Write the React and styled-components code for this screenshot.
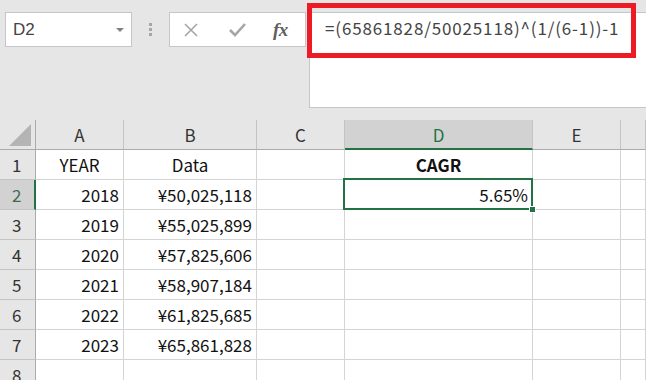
import React from "react";
import styled, { createGlobalStyle, css } from "styled-components";

const Global = createGlobalStyle`
  html, body { margin: 0; padding: 0; background: #e6e6e6; }
  body { width: 646px; height: 380px; overflow: hidden; font-family: "Noto Sans CJK JP", "Noto Sans", sans-serif; }
`;

const GREEN = "#217346";

const Page = styled.div`
  width: 646px;
  height: 380px;
  overflow: hidden;
  background: #e6e6e6;
`;

const TopBar = styled.div`
  display: flex;
  align-items: flex-start;
  height: 120px;
  box-sizing: border-box;
  padding: 12px 0 0 5px;
`;

const NameBox = styled.div`
  width: 127px;
  height: 35px;
  box-sizing: border-box;
  border: 1px solid #c6c6c6;
  background: #fff;
  display: flex;
  align-items: center;
  justify-content: space-between;
  padding: 0 7px 0 7px;
  font-family: "Liberation Sans", Arial, sans-serif;
  font-size: 17px;
  color: #444;
`;

const Caret = styled.span`
  width: 0;
  height: 0;
  border-left: 4px solid transparent;
  border-right: 4px solid transparent;
  border-top: 4px solid #808080;
  margin-top: 1px;
`;

const Grip = styled.div`
  margin: 11px 0 0 17px;
  display: flex;
  flex-direction: column;
  gap: 2px;
`;

const GripDot = styled.span`
  width: 3px;
  height: 3px;
  background: #a6a6a6;
`;

const ButtonGroup = styled.div`
  margin-left: 17px;
  width: 137px;
  height: 35px;
  box-sizing: border-box;
  border: 1px solid #c6c6c6;
  background: #fff;
  display: flex;
  align-items: center;
  padding-left: 13px;
`;

const IconSlot = styled.span`
  width: ${(p) => p.$w}px;
  height: 20px;
  display: flex;
  align-items: center;
  justify-content: flex-start;
`;

const Fx = styled.span`
  font-family: "Liberation Serif", "Times New Roman", serif;
  font-style: italic;
  font-weight: bold;
  font-size: 19px;
  color: #5f5f5f;
  letter-spacing: -0.5px;
  line-height: 1;
`;

const FormulaBox = styled.div`
  position: relative;
  margin-left: 3px;
  flex: 1;
  height: 96px;
  box-sizing: border-box;
  border: 1px solid #c6c6c6;
  border-right: none;
  background: #fff;
  padding: 3px 0 0 15px;
`;

const FormulaText = styled.div`
  font-family: "Noto Sans CJK JP", "Noto Sans", sans-serif;
  font-size: 17px;
  line-height: 24px;
  color: #444;
  letter-spacing: 0.85px;
  white-space: nowrap;
`;

const Highlight = styled.div`
  position: absolute;
  left: -3px;
  top: -10px;
  width: 329px;
  height: 55px;
  box-sizing: border-box;
  border: 5px solid #ed1c24;
  pointer-events: none;
`;

const Sheet = styled.div`
  display: grid;
  grid-template-columns: 36px 88px 133px 88px 188px 88px 1fr;
  grid-auto-rows: 30px;
  background: #fff;
`;

const Cell = styled.div`
  position: relative;
  box-sizing: border-box;
  border-right: 1px solid #d4d4d4;
  border-bottom: 1px solid #d4d4d4;
  background: #fff;
  display: flex;
  align-items: center;
  padding: 0 4px 1px 4px;
  font-size: 17px;
  color: #111;
  white-space: nowrap;
  justify-content: ${(p) =>
    p.$align === "right" ? "flex-end" : p.$align === "center" ? "center" : "flex-start"};
  font-weight: ${(p) => (p.$bold ? 700 : 400)};
  ${(p) =>
    p.$selected &&
    css`
      &::after {
        content: "";
        position: absolute;
        top: -2px;
        left: -2px;
        right: -1px;
        bottom: -1px;
        border: 2px solid ${GREEN};
        z-index: 2;
      }
      &::before {
        content: "";
        position: absolute;
        right: -4px;
        bottom: -4px;
        width: 5px;
        height: 5px;
        background: ${GREEN};
        border: 1px solid #fff;
        z-index: 3;
      }
    `}
`;

const ColHead = styled.div`
  box-sizing: border-box;
  background: ${(p) => (p.$active ? "#d2d2d2" : "#e6e6e6")};
  border-right: 1px solid #c4c4c4;
  border-bottom: ${(p) => (p.$active ? `2px solid ${GREEN}` : "1px solid #ababab")};
  display: flex;
  align-items: center;
  justify-content: center;
  padding-top: ${(p) => (p.$active ? "1px" : "0")};
  font-size: 17px;
  color: ${(p) => (p.$active ? GREEN : "#333")};
`;

const Corner = styled.div`
  box-sizing: border-box;
  background: #e6e6e6;
  border-right: 1px solid #ababab;
  border-bottom: 1px solid #ababab;
  display: flex;
  align-items: flex-end;
  justify-content: flex-end;
  padding: 0 4px 3px 0;
`;

const Triangle = styled.span`
  width: 0;
  height: 0;
  border-left: 22px solid transparent;
  border-bottom: 22px solid #b4b4b4;
`;

const RowHead = styled.div`
  box-sizing: border-box;
  background: ${(p) => (p.$active ? "#d2d2d2" : "#e6e6e6")};
  border-right: ${(p) => (p.$active ? `2px solid ${GREEN}` : "1px solid #ababab")};
  border-bottom: 1px solid #c4c4c4;
  display: flex;
  align-items: center;
  padding: 0 0 1px 12px;
  font-size: 17px;
  color: ${(p) => (p.$active ? "#3d6b51" : "#333")};
`;

const cols = ["A", "B", "C", "D", "E", ""];

const rows = [
  ["YEAR", "Data", "", "CAGR", "", ""],
  ["2018", "¥50,025,118", "", "5.65%", "", ""],
  ["2019", "¥55,025,899", "", "", "", ""],
  ["2020", "¥57,825,606", "", "", "", ""],
  ["2021", "¥58,907,184", "", "", "", ""],
  ["2022", "¥61,825,685", "", "", "", ""],
  ["2023", "¥65,861,828", "", "", "", ""],
  ["", "", "", "", "", ""],
];

function alignFor(r, c) {
  if (r === 0) return "center";
  if (c === 0 || c === 1 || c === 3) return "right";
  return "left";
}

export default function App() {
  return (
    <Page>
      <Global />
      <TopBar>
        <NameBox>
          <span>D2</span>
          <Caret />
        </NameBox>
        <Grip>
          <GripDot />
          <GripDot />
          <GripDot />
        </Grip>
        <ButtonGroup>
          <IconSlot $w={46}>
            <svg width="16" height="16" viewBox="0 0 16 16">
              <path d="M2 2 L14 14 M14 2 L2 14" stroke="#a6a6a6" strokeWidth="1.6" fill="none" />
            </svg>
          </IconSlot>
          <IconSlot $w={44}>
            <svg width="17" height="14" viewBox="0 0 17 14">
              <path d="M1 7 L6 12 L16 1" stroke="#a6a6a6" strokeWidth="2.6" fill="none" />
            </svg>
          </IconSlot>
          <IconSlot $w={30}>
            <Fx>fx</Fx>
          </IconSlot>
        </ButtonGroup>
        <FormulaBox>
          <Highlight />
          <FormulaText>=(65861828/50025118)^(1/(6-1))-1</FormulaText>
        </FormulaBox>
      </TopBar>
      <Sheet>
        <Corner>
          <Triangle />
        </Corner>
        {cols.map((c, i) => (
          <ColHead key={i} $active={c === "D"}>
            {c}
          </ColHead>
        ))}
        {rows.map((row, r) => (
          <React.Fragment key={r}>
            <RowHead $active={r === 1}>{r + 1}</RowHead>
            {row.map((v, c) => (
              <Cell
                key={c}
                $align={alignFor(r, c)}
                $bold={r === 0 && c === 3}
                $selected={r === 1 && c === 3}
              >
                {v}
              </Cell>
            ))}
          </React.Fragment>
        ))}
      </Sheet>
    </Page>
  );
}
